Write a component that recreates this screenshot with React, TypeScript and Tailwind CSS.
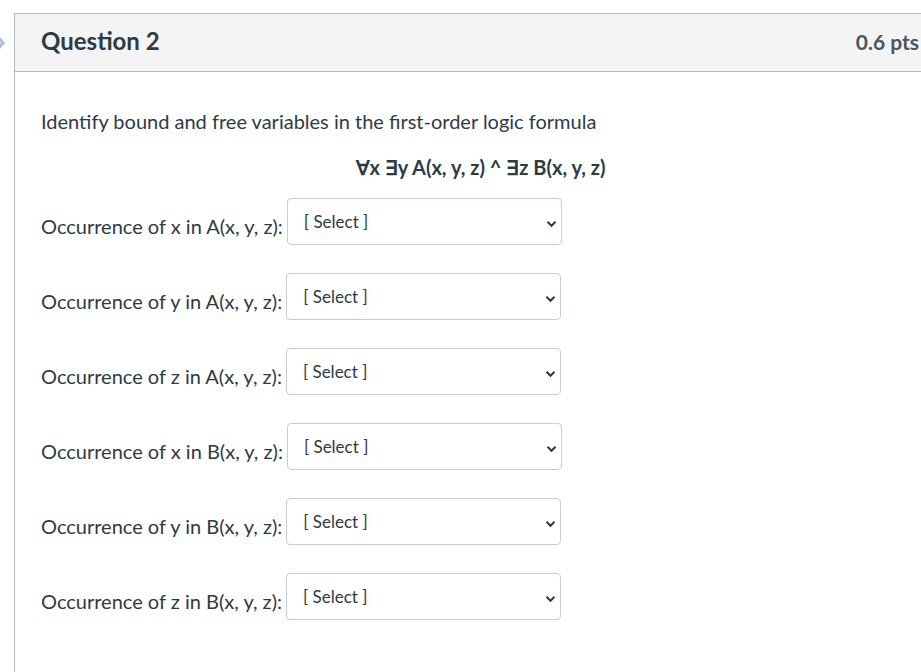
import React from 'react';

const rows = [
  'Occurrence of x in A(x, y, z):',
  'Occurrence of y in A(x, y, z):',
  'Occurrence of z in A(x, y, z):',
  'Occurrence of x in B(x, y, z):',
  'Occurrence of y in B(x, y, z):',
  'Occurrence of z in B(x, y, z):',
];

const SelectBox: React.FC = () => (
  <div className="w-[275px] h-[47px] border border-[#c7cdd1] rounded-[4px] bg-white flex items-center justify-between pl-[16px] pr-[4px] shrink-0">
    <span className="text-[17px] text-[#2d3b45]">[ Select ]</span>
    <svg width="11" height="8" viewBox="0 0 11 8" className="mt-[5px]">
      <path d="M1.5 1.8 L5.5 5.8 L9.5 1.8" fill="none" stroke="#2d3b45" strokeWidth="2" />
    </svg>
  </div>
);

export default function App() {
  return (
    <div className="relative w-[921px] h-[672px] overflow-hidden bg-white font-['Lato',sans-serif] text-[#2d3b45]">
      {/* cut-off marker on the left */}
      <svg width="8" height="14" viewBox="0 0 8 14" className="absolute left-[-3px] top-[36px]">
        <path d="M1 1 L6 7 L1 13" fill="none" stroke="#a9c0d6" strokeWidth="3" />
      </svg>

      <div className="ml-[14px] mt-[13px] w-[933px] h-[700px] border-l border-t border-[#b4bcc2]">
        <div className="h-[58px] bg-[#f4f4f4] border-b border-[#b4bcc2] flex items-center justify-between pl-[26px] pr-[28px] pb-[3px]">
          <h2 className="text-[24px] font-bold leading-none">Question 2</h2>
          <span className="text-[21px] font-bold text-[#4a5660] leading-none">0.6 pts</span>
        </div>

        <div className="pl-[26px] pr-[27px] pt-[36px]">
          <p className="text-[20px] leading-[27px]">
            Identify bound and free variables in the first-order logic formula
          </p>
          <p className="mt-[19px] text-[20px] leading-[27px] font-bold text-center">
            ∀x ∃y A(x, y, z) ^ ∃z B(x, y, z)
          </p>

          <div className="mt-[17px] flex flex-col gap-[28px]">
            {rows.map((label) => (
              <div key={label} className="flex items-center">
                <span className="text-[20px] leading-[27px] pt-[10px] mr-[4px]">{label}</span>
                <SelectBox />
              </div>
            ))}
          </div>
        </div>
      </div>
    </div>
  );
}
